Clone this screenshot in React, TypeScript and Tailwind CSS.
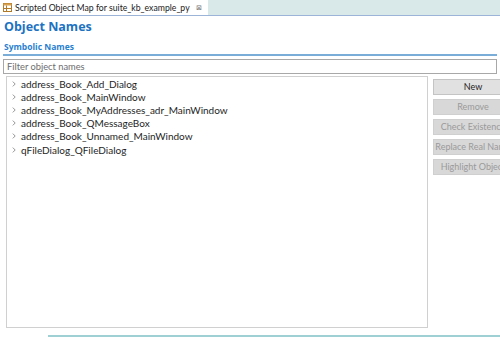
const names = [
  "address_Book_Add_Dialog",
  "address_Book_MainWindow",
  "address_Book_MyAddresses_adr_MainWindow",
  "address_Book_QMessageBox",
  "address_Book_Unnamed_MainWindow",
  "qFileDialog_QFileDialog",
];

const buttons = ["New", "Remove", "Check Existence", "Replace Real Name", "Highlight Object"];

function TabIcon() {
  return (
    <svg width="9" height="9" viewBox="0 0 9 9" className="shrink-0">
      <rect x="0.5" y="0.5" width="8" height="8" fill="#fff" stroke="#b07a2a" />
      <rect x="0.5" y="0.5" width="8" height="2" fill="#d9a250" />
      <line x1="3.5" y1="2.5" x2="3.5" y2="8.5" stroke="#b07a2a" />
      <line x1="0.5" y1="5.5" x2="8.5" y2="5.5" stroke="#b07a2a" />
    </svg>
  );
}

function Chevron() {
  return (
    <svg width="4" height="6" viewBox="0 0 4 6" className="shrink-0">
      <path d="M0.8 0.6 L3.2 3 L0.8 5.4" fill="none" stroke="#8a8a8a" strokeWidth="0.9" />
    </svg>
  );
}

export default function App() {
  return (
    <div
      className="flex h-[337px] w-[500px] flex-col overflow-hidden bg-white text-[9px] text-[#1e1e1e]"
      style={{ fontFamily: '"Open Sans", "Noto Sans", sans-serif' }}
    >
      <div className="flex h-[16px] shrink-0 border-b border-[#9cb4d8] bg-[#d9e8e8]">
        <div
          className="flex items-center gap-[3px] bg-white pl-[3px] pr-[6px]"
          style={{ fontFamily: 'Lato, "Open Sans", sans-serif' }}
        >
          <TabIcon />
          <span className="whitespace-nowrap text-[8.7px] text-[#222]">Scripted Object Map for suite_kb_example_py</span>
          <span className="ml-[3px] text-[7px] text-[#777]">⊠</span>
        </div>
        <div className="flex-1" />
      </div>

      <div className="px-[4px] pt-[3px] text-[12.5px] leading-[16px] font-bold text-[#1d72c2]">Object Names</div>

      <div className="mt-[6px] px-[4px] text-[8.5px] leading-[12px] font-bold text-[#2a7fcf]">Symbolic Names</div>
      <div className="mx-[3px] mt-[1px] h-[2px] shrink-0 bg-[#7aaed8]" />

      <div
        className="mx-[3px] mt-[3px] flex h-[15px] shrink-0 items-center border border-[#a8a8a8] px-[3px] text-[9.3px] text-[#6d6d6d]"
        style={{ fontFamily: 'Lato, "Open Sans", sans-serif' }}
      >
        Filter object names
      </div>

      <div
        className="mt-[2px] flex min-h-0 flex-1 gap-[5px] pl-[6px]"
        style={{ fontFamily: 'Lato, "Open Sans", sans-serif' }}
      >
        <div className="mb-[7px] w-[422px] shrink-0 border border-[#d0d0d0]">
          {names.map((n) => (
            <div key={n} className="flex h-[13.2px] items-center">
              <span className="flex w-[14px] pl-[5px]">
                <Chevron />
              </span>
              <span className="whitespace-nowrap text-[10px] leading-none">{n}</span>
            </div>
          ))}
        </div>
        <div className="flex min-w-0 flex-1 flex-col gap-[4px] overflow-hidden pt-[3px]">
          {buttons.map((b, i) => (
            <div
              key={b}
              className={
                "flex h-[16px] w-[80px] shrink-0 items-center justify-center whitespace-nowrap border text-[9px] " +
                (i === 0
                  ? "border-[#c4c4c4] bg-[#e1e1e1] text-[#1e1e1e]"
                  : "border-[#cfcfcf] bg-[#d8d8d8] text-[#9a9a9a]")
              }
            >
              {b}
            </div>
          ))}
        </div>
      </div>

      <div className="ml-[48px] h-[2px] shrink-0 bg-[#9fd0d4]" />
    </div>
  );
}
